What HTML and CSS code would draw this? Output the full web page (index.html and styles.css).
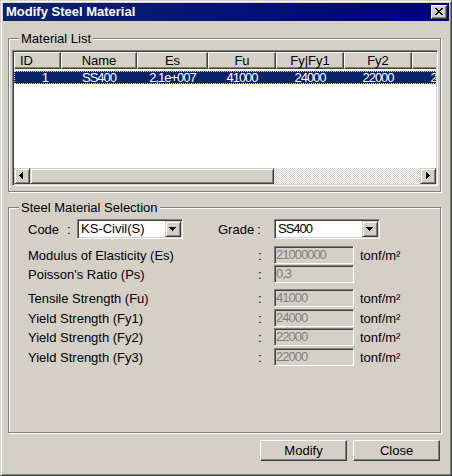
FILE: index.html
```html
<!DOCTYPE html>
<html>
<head>
<meta charset="utf-8">
<title>Modify Steel Material</title>
<link rel="stylesheet" href="styles.css">
</head>
<body>
<div class="window">
  <div class="titlebar">
    <span class="title">Modify Steel Material</span>
    <div class="caption-btn">
      <svg class="x-glyph" width="8" height="7" viewBox="0 0 8 7" shape-rendering="crispEdges"><path fill="#000" d="M0 0h2v1H0zM6 0h2v1H6zM1 1h2v1H1zM5 1h2v1H5zM2 2h4v1H2zM3 3h2v1H3zM2 4h4v1H2zM1 5h2v1H1zM5 5h2v1H5zM0 6h2v1H0zM6 6h2v1H6z"/></svg>
    </div>
  </div>
  <div class="client">
    <div class="group group-list">
      <span class="group-label">Material List</span>
      <div class="listbox">
        <div class="lv-header">
          <div class="hcell c-id">ID</div>
          <div class="hcell c-name">Name</div>
          <div class="hcell c-es">Es</div>
          <div class="hcell c-fu">Fu</div>
          <div class="hcell c-fy1">Fy|Fy1</div>
          <div class="hcell c-fy2">Fy2</div>
          <div class="hcell c-fy3">Fy3</div>
        </div>
        <div class="lv-body">
          <div class="lv-row selected">
            <span class="cell c-id">1</span>
            <span class="cell c-name">SS400</span>
            <span class="cell c-es">2,1e+007</span>
            <span class="cell c-fu">41000</span>
            <span class="cell c-fy1">24000</span>
            <span class="cell c-fy2">22000</span>
            <span class="cell c-fy3">22000</span>
          </div>
        </div>
        <div class="hscroll">
          <div class="sb-btn"><svg width="14" height="14" viewBox="1 1 14 14" shape-rendering="crispEdges"><path fill="#000" d="M5 7h1v1H5zM6 6h1v3H6zM7 5h1v5H7zM8 4h1v7H8z"/></svg></div>
          <div class="sb-thumb"></div>
          <div class="sb-track"></div>
          <div class="sb-btn"><svg width="14" height="14" viewBox="1 1 14 14" shape-rendering="crispEdges"><path fill="#000" d="M6 4h1v7H6zM7 5h1v5H7zM8 6h1v3H8zM9 7h1v1H9z"/></svg></div>
        </div>
      </div>
    </div>

    <div class="group group-sel">
      <span class="group-label">Steel Material Selection</span>
      <div class="code-row">
        <span class="lbl-code">Code</span>
        <span class="colon-code">:</span>
        <div class="combo">
          <span class="combo-text">KS-Civil(S)</span>
          <div class="combo-btn"><svg width="14" height="14" viewBox="1 1 14 14" shape-rendering="crispEdges"><path fill="#000" d="M4 6h7v1H4zM5 7h5v1H5zM6 8h3v1H6zM7 9h1v1H7z"/></svg></div>
        </div>
        <span class="lbl-grade">Grade</span>
        <span class="colon-grade">:</span>
        <div class="combo">
          <span class="combo-text narrow">SS400</span>
          <div class="combo-btn"><svg width="14" height="14" viewBox="1 1 14 14" shape-rendering="crispEdges"><path fill="#000" d="M4 6h7v1H4zM5 7h5v1H5zM6 8h3v1H6zM7 9h1v1H7z"/></svg></div>
        </div>
      </div>

      <div class="props">
        <div class="prop">
          <span class="prop-label">Modulus of Elasticity (Es)</span>
          <span class="prop-colon">:</span>
          <div class="field">21000000</div>
          <span class="unit">tonf/m²</span>
        </div>
        <div class="prop gap1">
          <span class="prop-label">Poisson's Ratio (Ps)</span>
          <span class="prop-colon">:</span>
          <div class="field">0,3</div>
        </div>
        <div class="prop gap6">
          <span class="prop-label">Tensile Strength (Fu)</span>
          <span class="prop-colon">:</span>
          <div class="field">41000</div>
          <span class="unit">tonf/m²</span>
        </div>
        <div class="prop gap2">
          <span class="prop-label">Yield Strength (Fy1)</span>
          <span class="prop-colon">:</span>
          <div class="field">24000</div>
          <span class="unit">tonf/m²</span>
        </div>
        <div class="prop gap1">
          <span class="prop-label">Yield Strength (Fy2)</span>
          <span class="prop-colon">:</span>
          <div class="field">22000</div>
          <span class="unit">tonf/m²</span>
        </div>
        <div class="prop gap2">
          <span class="prop-label">Yield Strength (Fy3)</span>
          <span class="prop-colon">:</span>
          <div class="field">22000</div>
          <span class="unit">tonf/m²</span>
        </div>
      </div>
    </div>

    <div class="buttons">
      <div class="btn">Modify</div>
      <div class="btn">Close</div>
    </div>
  </div>
</div>
</body>
</html>
```

FILE: styles.css
```css
* { box-sizing: border-box; }
html, body { margin: 0; padding: 0; }
body {
  width: 452px;
  height: 476px;
  overflow: hidden;
  background: #d4d0c8;
  font-family: "Liberation Sans", Arial, sans-serif;
  font-size: 13px;
  color: #000;
}

.window {
  width: 452px;
  height: 476px;
  border: 1px solid;
  border-color: #d4d0c8 #404040 #404040 #d4d0c8;
  padding: 2px;
  box-shadow: inset 1px 1px 0 #fff, inset -1px -1px 0 #808080;
  background: #d4d0c8;
  display: flex;
  flex-direction: column;
}

.titlebar {
  flex: none;
  height: 18px;
  display: flex;
  align-items: center;
  justify-content: space-between;
  padding: 0 2px 0 3px;
  background: linear-gradient(to right, #0a246a, #000080);
  color: #fff;
  font-weight: bold;
  font-size: 13px;
}
.title { line-height: 18px; white-space: nowrap; }
.caption-btn {
  width: 16px;
  height: 14px;
  border: 1px solid;
  border-color: #fff #404040 #404040 #fff;
  box-shadow: inset -1px -1px 0 #808080;
  background: #d4d0c8;
}
.x-glyph { display: block; margin: 2px 0 0 3px; }

.client { flex: 1; display: flex; flex-direction: column; }

.group {
  position: relative;
  flex: none;
  margin-left: 5px;
  width: 433px;
  border: 1px solid #808080;
  box-shadow: 1px 1px 0 #fff, inset 1px 1px 0 #fff;
}
.group-label {
  position: absolute;
  top: -8px;
  left: 10px;
  padding: 0 2px;
  line-height: 15px;
  background: #d4d0c8;
  white-space: nowrap;
}
.group-list { margin-top: 17px; height: 154px; padding: 11px 0 0 3px; }
.group-sel { margin-top: 15px; height: 226px; padding: 11px 0 0 19px; }

/* list view */
.listbox {
  width: 426px;
  height: 136px;
  border: 1px solid;
  border-color: #808080 #fff #fff #808080;
  padding: 1px;
  box-shadow: inset 1px 1px 0 #404040, inset -1px -1px 0 #d4d0c8;
  background: #fff;
  display: flex;
  flex-direction: column;
  overflow: hidden;
}
.lv-header { flex: none; display: flex; height: 17px; overflow: hidden; }
.hcell {
  flex: none;
  height: 17px;
  border: 1px solid;
  border-color: #fff #404040 #404040 #fff;
  box-shadow: inset -1px -1px 0 #808080;
  background: #d4d0c8;
  line-height: 15px;
  text-align: center;
  white-space: nowrap;
  overflow: hidden;
}
.c-id { width: 47px; }
.c-name { width: 76px; }
.c-es { width: 71px; }
.c-fu { width: 68px; }
.c-fy1 { width: 68px; }
.c-fy2 { width: 68px; }
.c-fy3 { width: 68px; }
.hcell.c-id { text-align: left; padding-left: 5px; }

.lv-body { flex: 1; padding-top: 2px; overflow: hidden; }
.lv-row {
  display: flex;
  height: 13px;
  line-height: 13px;
  overflow: hidden;
}
.lv-row.selected {
  background: #0a246a;
  color: #fff;
  outline: 1px dotted #f5db95;
  outline-offset: -1px;
}
.cell { flex: none; text-align: center; white-space: nowrap; letter-spacing: -1px; }
.cell.c-id { text-align: right; padding-right: 13px; }

.hscroll { flex: none; height: 16px; display: flex; background: #d4d0c8; }
.sb-btn, .sb-thumb, .combo-btn {
  flex: none;
  height: 16px;
  border: 1px solid;
  border-color: #d4d0c8 #404040 #404040 #d4d0c8;
  box-shadow: inset 1px 1px 0 #fff, inset -1px -1px 0 #808080;
  background: #d4d0c8;
}
.sb-btn, .combo-btn { width: 16px; }
.sb-btn svg, .combo-btn svg { display: block; }
.sb-thumb { width: 244px; }
.sb-track {
  flex: 1;
  background-image: conic-gradient(#fff 25%, #d4d0c8 0 50%, #fff 0 75%, #d4d0c8 0);
  background-size: 2px 2px;
}

/* selection */
.code-row { display: flex; align-items: center; height: 20px; }
.lbl-code { width: 39px; }
.colon-code { width: 10px; }
.lbl-grade { width: 39px; margin-left: 35px; }
.colon-grade { width: 17px; }
.combo {
  width: 106px;
  height: 20px;
  display: flex;
  border: 1px solid;
  border-color: #808080 #fff #fff #808080;
  padding: 1px;
  box-shadow: inset 1px 1px 0 #404040, inset -1px -1px 0 #d4d0c8;
  background: #fff;
}
.combo-text { flex: 1; line-height: 16px; padding-left: 2px; white-space: nowrap; }
.combo-text.narrow { letter-spacing: -1px; }

.props { margin-top: 7px; display: flex; flex-direction: column; }
.prop { display: flex; align-items: center; height: 18px; }
.prop.gap1 { margin-top: 1px; }
.prop.gap2 { margin-top: 2px; }
.prop.gap6 { margin-top: 6px; }
.prop-label { width: 230px; white-space: nowrap; }
.prop-colon { width: 16px; }
.field {
  width: 80px;
  height: 18px;
  border: 1px solid;
  border-color: #808080 #fff #fff #808080;
  padding: 1px;
  box-shadow: inset 1px 1px 0 #404040, inset -1px -1px 0 #d4d0c8;
  background: #d4d0c8;
  color: #808080;
  line-height: 14px;
  letter-spacing: -1px;
  white-space: nowrap;
}
.unit { margin-left: 6px; white-space: nowrap; }

.buttons {
  display: flex;
  justify-content: flex-end;
  gap: 6px;
  margin-top: 7px;
  padding-right: 9px;
}
.btn {
  width: 87px;
  height: 21px;
  border: 1px solid;
  border-color: #fff #404040 #404040 #fff;
  box-shadow: inset -1px -1px 0 #808080;
  background: #d4d0c8;
  line-height: 19px;
  text-align: center;
}
```
